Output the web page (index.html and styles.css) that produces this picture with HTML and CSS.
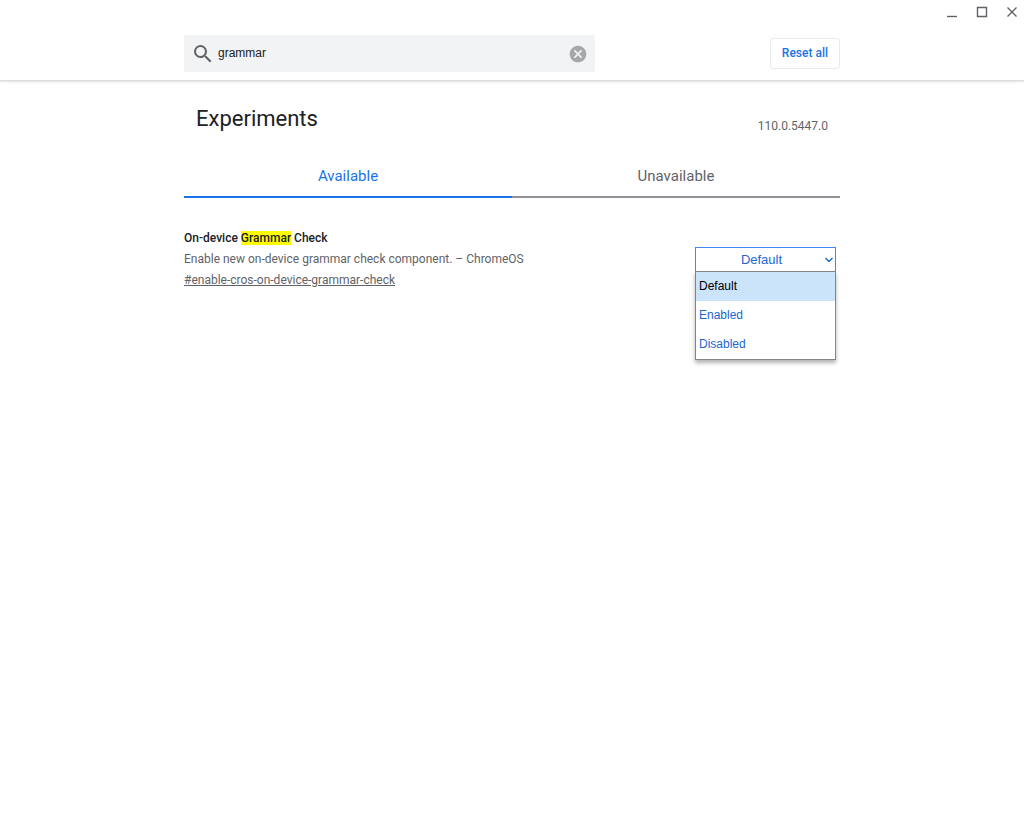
FILE: index.html
```html
<!DOCTYPE html>
<html lang="en">
<head>
    <meta charset="UTF-8">
    <meta name="viewport" content="width=device-width, initial-scale=1.0">
    <title>Experiments</title>
    <link rel="stylesheet" href="styles.css">
</head>
<body>
    <header class="page-header">
        <div class="window-controls">
            <button type="button" aria-label="Minimize">
                <svg width="12" height="12" viewBox="0 0 12 12"><path d="M1 10.5h10" /></svg>
            </button>
            <button type="button" aria-label="Maximize">
                <svg width="12" height="12" viewBox="0 0 12 12"><path d="M1.5 1.5h9v9h-9z" /></svg>
            </button>
            <button type="button" aria-label="Close">
                <svg width="12" height="12" viewBox="0 0 12 12"><path d="M1.5 1.5l9 9M10.5 1.5l-9 9" /></svg>
            </button>
        </div>
        <div class="toolbar">
            <div class="search-box">
                <label for="search" aria-label="Search flags">
                    <svg class="search-icon" width="24" height="24" viewBox="0 0 24 24"><path d="M15.5 14h-.79l-.28-.27A6.47 6.47 0 0 0 16 9.5 6.5 6.5 0 1 0 9.5 16c1.61 0 3.09-.59 4.23-1.57l.27.28v.79l5 4.99L20.49 19l-4.99-5zm-6 0C7.01 14 5 11.99 5 9.5S7.01 5 9.5 5 14 7.01 14 9.5 11.99 14 9.5 14z" /></svg>
                </label>
                <input type="text" id="search" value="grammar" autocomplete="off" spellcheck="false">
                <button type="button" class="clear-search" aria-label="Clear search">
                    <svg width="20" height="20" viewBox="0 0 24 24"><path d="M12 2C6.47 2 2 6.47 2 12s4.47 10 10 10 10-4.47 10-10S17.53 2 12 2zm5 13.59L15.59 17 12 13.41 8.41 17 7 15.59 10.59 12 7 8.41 8.41 7 12 10.59 15.59 7 17 8.41 13.41 12 17 15.59z" /></svg>
                </button>
            </div>
            <button type="button" class="reset-all">Reset all</button>
        </div>
    </header>

    <main class="content">
        <div class="title-row">
            <h1>Experiments</h1>
            <span class="version">110.0.5447.0</span>
        </div>

        <div class="tabs" role="tablist">
            <button type="button" class="tab selected" role="tab" aria-selected="true">Available</button>
            <button type="button" class="tab" role="tab" aria-selected="false">Unavailable</button>
        </div>

        <section class="experiment">
            <div class="experiment-info">
                <h2>On-device <mark>Grammar</mark> Check</h2>
                <p>Enable new on-device grammar check component. – ChromeOS</p>
                <a href="#enable-cros-on-device-grammar-check">#enable-cros-on-device-grammar-check</a>
            </div>
            <div class="experiment-actions">
                <select class="experiment-select" aria-label="On-device Grammar Check">
                    <option selected>Default</option>
                    <option>Enabled</option>
                    <option>Disabled</option>
                </select>
                <svg class="chevron" width="10" height="10" viewBox="0 0 10 10"><path d="M1.5 3L5 6.5 8.5 3" /></svg>
                <ul class="options" role="listbox" aria-label="On-device Grammar Check">
                    <li class="active" role="option" aria-selected="true">Default</li>
                    <li role="option" aria-selected="false">Enabled</li>
                    <li role="option" aria-selected="false">Disabled</li>
                </ul>
            </div>
        </section>
    </main>
</body>
</html>
```
FILE: styles.css
```css
* {
    box-sizing: border-box;
}

body {
    min-height: 100vh;
    margin: 0;
    background: #fff;
    color: #202124;
    font-family: Roboto, "Liberation Sans", sans-serif;
    font-size: 12px;
}

button {
    font-family: inherit;
    cursor: pointer;
}

.page-header {
    padding-bottom: 8px;
    border-bottom: 1px solid #dcdcdc;
    box-shadow: 0 1px 2px rgba(0, 0, 0, 0.12);
}

.window-controls {
    display: flex;
    justify-content: flex-end;
    gap: 18px;
    padding: 6px 6px 17px;
}

.window-controls button {
    display: flex;
    padding: 0;
    border: none;
    background: none;
}

.window-controls svg {
    fill: none;
    stroke: #5f6368;
    stroke-width: 1.4;
}

.toolbar,
.content {
    width: 100%;
    max-width: 656px;
    margin: 0 auto;
}

.toolbar {
    display: flex;
    align-items: center;
    justify-content: space-between;
    gap: 16px;
}

.search-box {
    display: flex;
    align-items: center;
    flex: 0 1 411px;
    height: 37px;
    padding: 0 7px;
    border-radius: 2px;
    background: #f1f3f4;
}

.search-box label,
.clear-search {
    display: flex;
}

.search-icon {
    fill: #5f6368;
}

.search-box input {
    flex: 1;
    min-width: 0;
    padding: 0 3px 2px;
    border: none;
    outline: none;
    background: none;
    color: #202124;
    font-family: "Liberation Sans", sans-serif;
    font-size: 12px;
}

.clear-search {
    padding: 0;
    border: none;
    background: none;
}

.clear-search svg {
    fill: #a5a8aa;
}

.reset-all {
    height: 31px;
    padding: 0 11px 2px;
    border: 1px solid #e8eaed;
    border-radius: 3px;
    background: #fff;
    color: #1a73e8;
    font-size: 12px;
    font-weight: 500;
}

.title-row {
    display: flex;
    align-items: flex-end;
    justify-content: space-between;
    padding: 23px 12px 21px;
}

h1 {
    margin: 0;
    font-size: 22px;
    font-weight: 400;
    line-height: 30px;
}

.version {
    color: #5f6368;
    font-size: 12px;
    line-height: 16px;
}

.tabs {
    display: flex;
}

.tab {
    flex: 1;
    height: 43px;
    padding: 0;
    border: none;
    border-bottom: 2px solid #909297;
    background: none;
    color: #5f6368;
    font-size: 15px;
}

.tab.selected {
    border-color: #1a73e8;
    color: #1a73e8;
}

.experiment {
    display: flex;
    justify-content: space-between;
    padding: 30px 4px 0 0;
    color: #5f6368;
    font-size: 12px;
    line-height: 21px;
}

h2 {
    margin: 0;
    color: #202124;
    font-size: 12px;
    font-weight: 500;
}

mark {
    background: #ff0;
    color: inherit;
}

.experiment p {
    margin: 0;
}

.experiment a {
    color: inherit;
}

.experiment-actions {
    position: relative;
    width: 141px;
    padding-top: 19px;
}

.experiment-select {
    display: block;
    width: 100%;
    height: 25px;
    padding: 0 8px 0 0;
    border: 1px solid #4285f4;
    border-radius: 0;
    outline: none;
    appearance: none;
    background: #fff;
    color: #1967d2;
    font-family: "Liberation Sans", sans-serif;
    font-size: 13px;
    text-align: center;
    text-align-last: center;
}

.chevron {
    position: absolute;
    top: 27px;
    right: 2px;
    fill: none;
    stroke: #1967d2;
    stroke-width: 1.4;
    pointer-events: none;
}

/* open list lies over whatever follows the row */
.options {
    position: absolute;
    top: 43px;
    left: 0;
    width: 100%;
    margin: 0;
    padding: 0;
    border: 1px solid #858585;
    background: #fff;
    box-shadow: 0 3px 4px rgba(0, 0, 0, 0.3);
    color: #1967d2;
    font-family: "Liberation Sans", sans-serif;
    font-size: 12px;
    line-height: 29px;
    list-style: none;
}

.options li {
    padding: 0 3px;
    cursor: default;
}

.options .active {
    background: #cce4f9;
    color: #000;
}
```
